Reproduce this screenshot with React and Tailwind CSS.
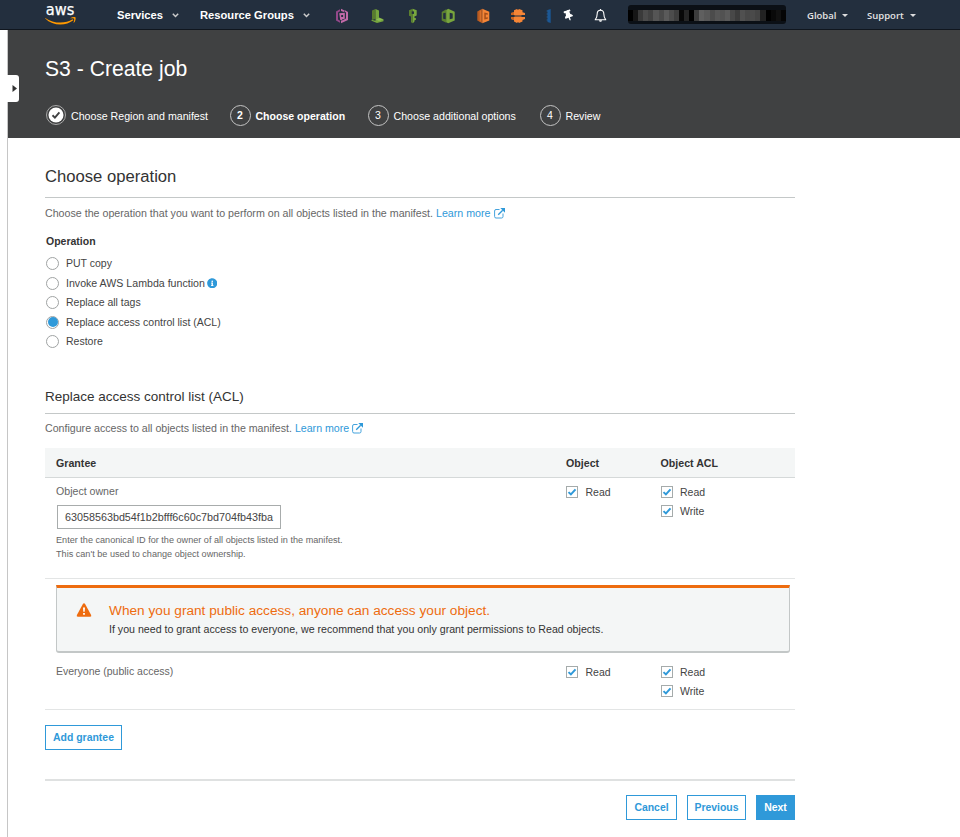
import { FaThumbtack, FaInfoCircle } from "react-icons/fa";

const Txt = ({ className = "", children }) => (
  <span className={"inline-block whitespace-nowrap " + className}>{children}</span>
);

function AwsLogo() {
  return (
    <svg width="32" height="29" viewBox="0 -3.500 32 29" className="block">
      <text x="0.8" y="11.900" fontSize="15" fill="#fff" stroke="#fff" strokeWidth="0.250" textLength="28.500" lengthAdjust="spacingAndGlyphs" fontFamily="'DejaVu Sans', sans-serif">aws</text>
      <path d="M.3 14.400C8 20 20 20.800 27.600 15.800l.8.9C20.500 22.800 7.500 22.300.2 14.900z" fill="#f90" />
      <path d="M25.600 14.500c1.600-1 4-1.100 5-.6.3 1.700-.3 4-1.700 5.300l-.4-.3c.5-1.300 1-3 .6-3.700-.600-.5-2.200-.4-3.400-.3z" fill="#f90" />
    </svg>
  );
}

const Chevron = () => (
  <svg width="7" height="5" viewBox="0 0 7 5"><path d="M.8.8l2.700 2.700L6.200.8" fill="none" stroke="#ccc" strokeWidth="1.500" /></svg>
);
const Caret = () => (
  <svg width="6" height="3" viewBox="0 0 6 3"><path d="M0 0h6L3 3z" fill="#ddd" /></svg>
);

function ServiceIcons() {
  return (
    <svg width="216" height="16" viewBox="0 0 216 16" className="block">
      <g fill="#c26aa8">
        <path d="M0 3.500L4 1.200v2L2 4.500v7l2 1.300v2L0 12.500z" fill="#93488a" />
        <path d="M5 .8l3 1.500v1.800L5 3zM5 13l3-1.500 2-1V4.500L8.500 3.500V1.900l3.500 2v8.200L5 15.300z" />
        <path d="M3.200 5.300l5.600-.6v6l-2.600.6v1.500l-2-1zm2 1.700v2h1.900V7z" fillRule="evenodd" />
      </g>
      <g>
        <path d="M36 2.500l3.500-1.500v10L36 12z" fill="#587c2d" />
        <path d="M39.500 1l3.500 1.500v7l4.500 1.800v2L41 15l-5.500-2.300v-1l4 1z" fill="#76a63e" />
        <path d="M40 11.500l3-1.500 4 1.600-4 1.500z" fill="#8ebd56" />
      </g>
      <g transform="translate(3.700 0)">
        <path d="M69.300 2.200L73 .8v14.400l-1.700-1V8.500l-2-.7z" fill="#5c812f" />
        <path d="M73 .8l4 1.500v5.200l-2.300 1v1.300l1.500.5v1.500l-1.500.6v1.400L73 15.200z" fill="#79a83e" />
        <path d="M72 3.400h2.300v2.500H72z" fill="#232f3e" />
      </g>
      <g transform="translate(3.700 0)">
        <path d="M102 4l4.500-2.800v13.600L102 12.500z" fill="#5c812f" />
        <path d="M106.500 2l2-1.200 6.500 3v8.700l-6.500 2.700-2-1z" fill="#78a53d" />
        <path d="M103.500 5.300l2.500-.6v6.600l-2.500-.6zM110 4.700l3 .7v5.200l-3 .7z" fill="#232f3e" />
      </g>
      <g transform="translate(4.300 0)">
        <path d="M137 3.500l5-2.700v14.400l-5-2.700z" fill="#b85a20" />
        <path d="M142 .8l7 3v8.700l-7 2.700z" fill="#f58536" />
        <path d="M139.500 2.500h.7v11h-.7z" fill="#f58536" />
        <path d="M144 4.500l3.500.8v1.500l-2-.2v2.900l2-.2v1.400l-3.500.8z" fill="#a64e19" />
      </g>
      <g transform="translate(6 0)">
        <path d="M172 2.200l3-1.200 1 1 1-1 3.500 1.200v2l2.500.8v2h-14V5l3-.8zM169 9h14v2l-2.500 1v1.500L177 15l-1-1-1 1-3-1.500V12l-3-1z" fill="#f58536" />
        <path d="M169 5l3-.8V7h-3zM169 9h3v3l-3-1z" fill="#c9631f" />
        <path d="M172.500 7.500h7v1h-7z" fill="#f58536" />
      </g>
      <path d="M211.500 2l3.200-1v14l-3.200-1z" fill="#1b5794" />
      <path d="M210.700 3h1M210.700 6h1M210.700 9h1M210.700 12h1" stroke="#2567a8" />
    </svg>
  );
}

const Bell = () => (
  <svg width="13" height="14" viewBox="0 0 13 14" className="block">
    <path d="M6.500 1.200c-2.300 0-3.300 1.600-3.300 3.500 0 3.300-.7 4.500-2 6.100h10.600c-1.300-1.600-2-2.800-2-6.100 0-1.900-1-3.500-3.300-3.500z" fill="none" stroke="#fff" strokeWidth="1.100" strokeLinejoin="round" />
    <path d="M6.500 0v1.500" stroke="#fff" strokeWidth="1.200" />
    <path d="M5 11.300c.2 2 2.800 2 3 0z" fill="#fff" />
  </svg>
);

const MOSAIC = ["#000", "#161616", "#3a3a3a", "#4b4b4b", "#424242", "#555", "#4a4a4a", "#5a5a5a", "#4c4c4c", "#3e3e3e", "#080808", "#252525", "#000", "#3c3c3c", "#5f5f5f", "#585858", "#4c4c4c", "#565656", "#525252", "#5a5a5a", "#484848", "#3c3c3c", "#505050", "#484848", "#4a4a4a", "#444", "#222", "#000", "#090909", "#111", "#050505"];

function TopBar() {
  return (
    <header className="flex h-[30px] items-center border-b border-[#10161e] bg-[#232f3e] text-white">
      <div className="ml-[45px] w-[72px]"><AwsLogo /></div>
      <div className="flex w-[83px] items-center pt-[2px]"><Txt className="w-[55px] text-[11.200px] font-bold">Services</Txt><Chevron /></div>
      <div className="flex w-[136px] items-center pt-[2px]"><Txt className="w-[103px] text-[11.200px] font-bold">Resource Groups</Txt><Chevron /></div>
      <div className="w-[227px] pt-[2px]"><ServiceIcons /></div>
      <div className="w-[31px] pt-[2px]"><FaThumbtack className="-rotate-[20deg] text-[11px]" /></div>
      <div className="w-[34px] pt-[2px]"><Bell /></div>
      <div className="flex h-[19px] w-[158px] flex-col rounded-[3px] bg-[#0b1016] pt-[5px]">
        <div className="flex h-[11px]">
          {MOSAIC.map((c, i) => <i key={i} className="h-full flex-1" style={{ background: c }} />)}
        </div>
      </div>
      <div className="ml-[21px] flex w-[60px] items-center pt-[2px] font-['Open_Sans',sans-serif] text-[9.500px] font-semibold text-[#e4e4e4]"><Txt className="w-[35px]">Global</Txt><Caret /></div>
      <div className="flex items-center pt-[2px] font-['Open_Sans',sans-serif] text-[9.500px] font-semibold text-[#e4e4e4]"><Txt className="w-[43px]">Support</Txt><Caret /></div>
    </header>
  );
}

function Step({ n, label, active, done, w }) {
  return (
    <div className={"flex h-[22px] items-center " + w}>
      {done ? (
        <svg width="22" height="22" viewBox="0 0 22 22" className="mr-[4px] shrink-0">
          <circle cx="11" cy="11" r="9.500" fill="#404142" stroke="#a9a9a9" />
          <circle cx="11" cy="11" r="7.500" fill="#fff" />
          <path d="M7.500 11.300l2.400 2.300 4.500-5.200" fill="none" stroke="#404142" strokeWidth="1.900" />
        </svg>
      ) : (
        <span className={"mr-[5px] ml-[0.500px] flex h-[21px] w-[21px] shrink-0 items-center justify-center rounded-full border border-[#c4c4c4] pt-px text-[10.500px] " + (active ? "font-bold" : "")}>{n}</span>
      )}
      <Txt className={"pt-[2px] " + (active ? "text-[10.550px] font-bold" : "text-[10.640px]")}>{label}</Txt>
    </div>
  );
}

function LearnMore() {
  return (
    <span className="ml-[3px] inline-flex items-center gap-[3px] text-[#2f99d9]">
      <Txt>Learn more</Txt>
      <svg width="11" height="11" viewBox="0 0 11 11" className="mb-[1px]">
        <path d="M5.500 1.500H2Q.6 1.500.6 3v5.500Q.6 10 2 10h5.500Q9 10 9 8.500V5.500" fill="none" stroke="currentColor" strokeWidth="0.900" />
        <path d="M4.200 6.800l4.500-4.500" stroke="currentColor" strokeWidth="1.300" />
        <path d="M6.300 0H11v4.700z" fill="currentColor" />
      </svg>
    </span>
  );
}

const Radio = ({ on, children }) => (
  <label className="flex h-[19.500px] items-center">
    <span className="mr-[7px] flex h-[13px] w-[13px] items-center justify-center rounded-full border border-[#a0a3a3] bg-white">
      {on && <span className="h-[10px] w-[10px] shrink-0 rounded-full bg-[#2f99d9]" />}
    </span>
    <Txt className="pb-[0.600px] text-[10.500px] text-[#444]">{children}</Txt>
  </label>
);

const Check = ({ children }) => (
  <label className="flex h-[19.500px] items-center">
    <span className="mr-[7.500px] flex h-[12px] w-[12px] items-center justify-center border border-[#a5abab] bg-white">
      <svg width="10" height="10" viewBox="0 0 10 10" className="shrink-0"><path d="M1.500 5.100l2.400 2.300 4.600-5" fill="none" stroke="#2f99d9" strokeWidth="2" /></svg>
    </span>
    <Txt className="pt-[0.400px] text-[10.500px] text-[#444]">{children}</Txt>
  </label>
);

const Permissions = () => (
  <>
    <div className="w-[94.500px]"><Check>Read</Check></div>
    <div><Check>Read</Check><Check>Write</Check></div>
  </>
);

const Button = ({ w, primary, children }) => (
  <button className={"flex h-[25px] items-center justify-center border border-[#2f99d9] pt-[2px] text-[10.450px] font-bold whitespace-nowrap " + w + (primary ? " bg-[#2f99d9] text-white" : " bg-white text-[#2f99d9]")}>{children}</button>
);

export default function App() {
  return (
    <div className="h-[837px] w-[960px] overflow-hidden bg-white font-['Liberation_Sans',Arial,sans-serif] leading-none text-[#444]">
      <TopBar />
      <div className="flex h-[807px]">
        <aside className="relative w-[8px] shrink-0 border-r border-[#c6c6c6] bg-white">
          <div className="absolute top-[45px] left-0 flex h-[27px] w-[19px] items-center justify-end rounded-r-[3px] bg-white pr-[2px]">
            <svg width="5" height="7" viewBox="0 0 5 7"><path d="M.5 0v7L5 3.500z" fill="#333" /></svg>
          </div>
        </aside>
        <div className="flex-1">
          <section className="h-[108px] bg-[#404142] pl-[37px] text-white">
            <h1 className="flex h-[74px] items-center pt-[3px] text-[21.150px]"><Txt>S3 - Create job</Txt></h1>
            <div className="flex">
              <Step n="1" label="Choose Region and manifest" done w="w-[184px]" />
              <Step n="2" label="Choose operation" active w="w-[138px]" />
              <Step n="3" label="Choose additional options" w="w-[172px]" />
              <Step n="4" label="Review" w="w-[90px]" />
            </div>
          </section>
          <main className="ml-[37px] w-[750px]">
            <h2 className="flex h-[60px] items-center border-b border-[#c4c8c8] pt-[20.500px] text-[16.650px] text-[#333]"><Txt>Choose operation</Txt></h2>
            <p className="flex h-[31px] items-center text-[10.660px] text-[#666]"><Txt>Choose the operation that you want to perform on all objects listed in the manifest.</Txt><LearnMore /></p>
            <h4 className="flex h-[25px] items-center pl-[1px] text-[10.500px] font-bold text-[#333]"><Txt>Operation</Txt></h4>
            <div className="pl-[1px]">
              <Radio>PUT copy</Radio>
              <Radio><span className="flex items-center gap-[2px] text-[10.620px]">Invoke AWS Lambda function<FaInfoCircle className="text-[10.500px] text-[#2f99d9]" /></span></Radio>
              <Radio>Replace all tags</Radio>
              <Radio on>Replace access control list (ACL)</Radio>
              <Radio>Restore</Radio>
            </div>
            <h3 className="mt-[0.500px] flex h-[62px] items-center border-b border-[#c4c8c8] pt-[29px] text-[13.500px] text-[#333]"><Txt>Replace access control list (ACL)</Txt></h3>
            <p className="flex h-[34px] items-center pb-[5px] text-[10.640px] text-[#666]"><Txt>Configure access to all objects listed in the manifest.</Txt><LearnMore /></p>
            <div className="flex h-[30px] items-center border-b border-[#d5d9d9] bg-[#f4f6f6] pt-[1px] pl-[11px] text-[10.650px] font-bold text-[#333]">
              <Txt className="w-[510px]">Grantee</Txt><Txt className="w-[94.500px]">Object</Txt><Txt>Object ACL</Txt>
            </div>
            <div className="flex h-[101px] border-b border-[#e3e5e5] pt-[4px] pl-[11px]">
              <div className="w-[510px] text-[#666]">
                <div className="flex h-[23px] items-center pb-[4px] text-[10.600px]"><Txt>Object owner</Txt></div>
                <div className="ml-[1px] flex h-[24px] w-[224px] items-center border border-[#a8acac] bg-white pl-[7px] text-[10.780px] text-[#444]"><Txt>63058563bd54f1b2bfff6c60c7bd704fb43fba</Txt></div>
                <div className="mt-[5px] text-[9.120px] leading-[13.500px]"><Txt>Enter the canonical ID for the owner of all objects listed in the manifest.</Txt><br /><Txt>This can't be used to change object ownership.</Txt></div>
              </div>
              <Permissions />
            </div>
            <div className="h-[131px] border-b border-[#e3e5e5] pt-[6px] pl-[11px]">
              <div className="flex h-[68px] w-[734px] rounded-b-[3px] border border-t-[3px] border-b-2 border-[#c3c7c7] border-t-[#ee6c0f] bg-[#f4f6f6] pl-[19px]">
                <svg width="16" height="14" viewBox="0 0 16 14" className="mt-[15px] mr-[17px]">
                  <path d="M8 .3q.7 0 1.100.7l6 11q.7 1.700-.9 1.800H1.800Q.2 13.700.9 12L6.900 1Q7.300.3 8 .3z" fill="#ee6c0f" />
                  <path d="M7 4.500h2l-.3 4.300H7.300zM7.100 10h1.800v1.700H7.100z" fill="#fff" />
                </svg>
                <div className="pt-[16px]">
                  <div className="h-[20px] text-[13.660px] text-[#ee6c0f]"><Txt>When you grant public access, anyone can access your object.</Txt></div>
                  <div className="text-[10.640px] text-[#333]"><Txt>If you need to grant access to everyone, we recommend that you only grant permissions to Read objects.</Txt></div>
                </div>
              </div>
              <div className="flex pt-[9px]">
                <div className="flex h-[19px] w-[510px] items-center text-[10.500px] text-[#666]"><Txt>Everyone (public access)</Txt></div>
                <Permissions />
              </div>
            </div>
            <div className="h-[71px] border-b-2 border-[#dfe1e1] pt-[15px]"><Button w="w-[77px]">Add grantee</Button></div>
            <div className="flex justify-end gap-[10px] pt-[14px]">
              <Button w="w-[51px]">Cancel</Button>
              <Button w="w-[59px]">Previous</Button>
              <Button w="w-[39px]" primary>Next</Button>
            </div>
          </main>
        </div>
      </div>
    </div>
  );
}
